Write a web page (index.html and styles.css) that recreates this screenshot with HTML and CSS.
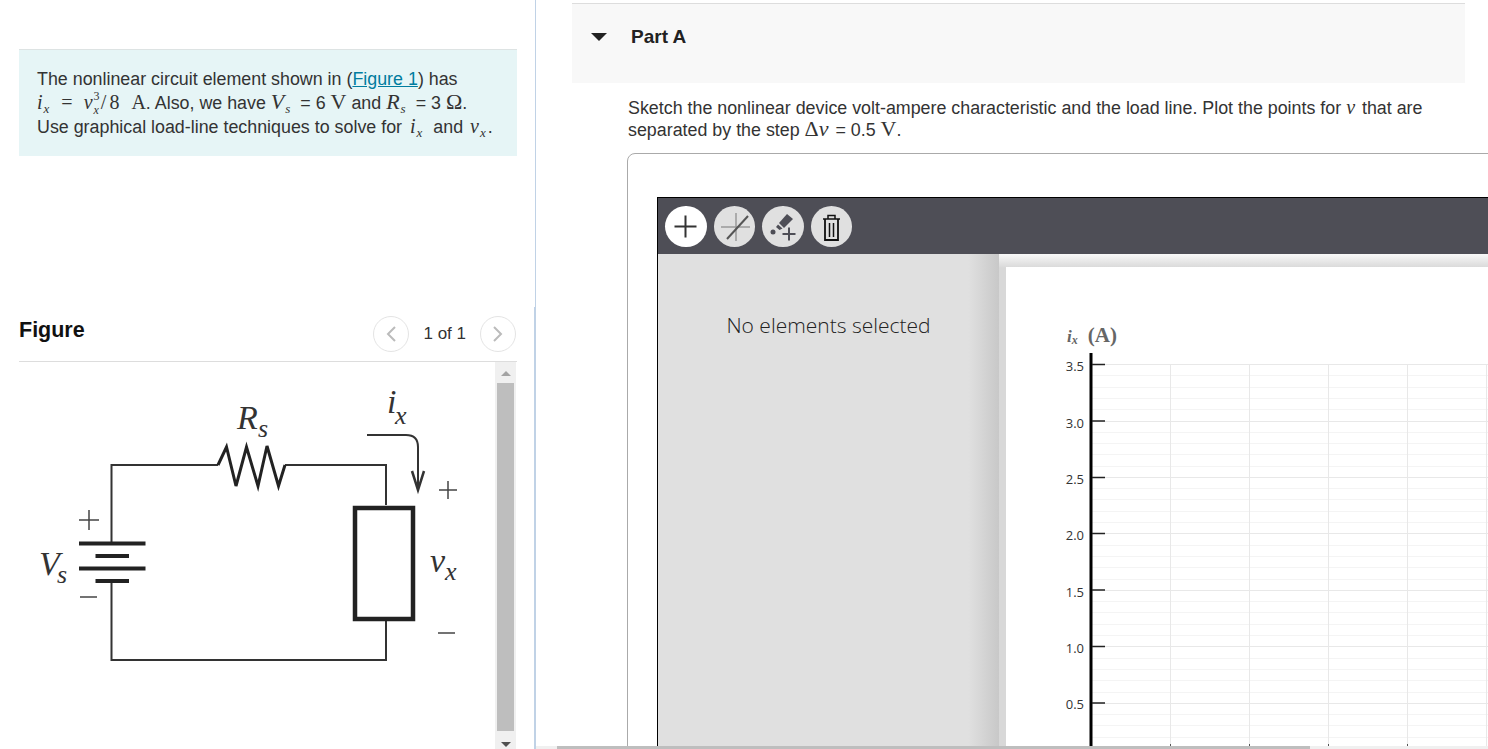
FILE: index.html
```html
<!DOCTYPE html>
<html lang="en">
<head>
    <meta charset="UTF-8">
    <title>Part A</title>
    <link rel="stylesheet" href="styles.css">
</head>
<body>
    <div class="page">
        <div class="left-col">
            <div class="statement">
                The nonlinear circuit element shown in (<a href="#">Figure 1</a>) has<br>
                <span class="m"><i>i</i><sub>x</sub><span class="rel">=</span><i>v</i><sup>3</sup><sub>x</sub><span class="slash">/</span>8<span class="unit">A</span></span>. Also, we have <span class="m big"><i>V</i><sub>s</sub></span> = 6 <span class="m big">V</span> and <span class="m big"><i>R</i><sub>s</sub></span> = 3 <span class="m big">Ω</span>.<br>
                Use graphical load-line techniques to solve for <span class="m first"><i>i</i><sub>x</sub></span> and <span class="m second"><i>v</i><sub>x</sub></span>.
            </div>
            <div class="figure-head">
                <h2>Figure</h2>
                <div class="pager">
                    <span class="pager-btn">
                        <svg width="12" height="18" viewBox="0 0 12 18"><path d="M10 2 3 9l7 7" fill="none" stroke="#bbb" stroke-width="2"/></svg>
                    </span>
                    <span class="pager-text">1 of 1</span>
                    <span class="pager-btn">
                        <svg width="12" height="18" viewBox="0 0 12 18"><path d="M2 2l7 7-7 7" fill="none" stroke="#bbb" stroke-width="2"/></svg>
                    </span>
                </div>
            </div>
            <div class="figure-body">
                <svg class="circuit" width="478" height="388" viewBox="0 362 478 388">
                    <g fill="none" stroke="#333" stroke-width="2">
                        <path d="M386 505V465H285"/>
                        <path d="M218 465H111.500V544"/>
                        <path d="M111.500 580V660H386V619"/>
                    </g>
                    <path d="M218 465l8.500-18 9.500 39 10.500-39 11.500 39 9-40 11.500 40 6.500-21" fill="none" stroke="#222" stroke-width="3"/>
                    <rect x="355" y="508" width="58" height="111" fill="none" stroke="#222" stroke-width="4.500"/>
                    <path d="M79 543.500H145.500M95.500 556H129M79 568.500H145.500M95.500 581H129" stroke="#222" stroke-width="4"/>
                    <path d="M367 435h39q12 0 12 12v42" fill="none" stroke="#333" stroke-width="2"/>
                    <path d="M412 471l6 19 6-19" fill="none" stroke="#333" stroke-width="2.500"/>
                    <g stroke="#444" stroke-width="1.500">
                        <path d="M439 490h18M448 481v18"/>
                        <path d="M438 633h17"/>
                        <path d="M79 520h20M89 510v20"/>
                        <path d="M80 597h17"/>
                    </g>
                    <text class="lbl" x="237" y="429">R</text>
                    <text class="lbl small" x="258" y="437">s</text>
                    <text class="lbl" x="387" y="413">i</text>
                    <text class="lbl small" x="395" y="424">x</text>
                    <text class="lbl" x="39" y="575">V</text>
                    <text class="lbl small" x="57" y="583">s</text>
                    <text class="lbl" x="430" y="572">v</text>
                    <text class="lbl small" x="445" y="580">x</text>
                </svg>
                <div class="scrollbar">
                    <span class="arrow-up"></span>
                    <span class="thumb"></span>
                    <span class="arrow-down"></span>
                </div>
            </div>
        </div>

        <div class="right-col">
            <div class="part-head">
                <span class="caret"></span>
                <h3>Part A</h3>
            </div>
            <p class="question">
                Sketch the nonlinear device volt-ampere characteristic and the load line. Plot the points for <span class="m"><i>v</i></span> that are<br>
                separated by the step <span class="m big">Δ<i>v</i></span> = 0.5 <span class="m big">V</span>.
            </p>
            <div class="answer-box">
                <div class="tool">
                    <div class="toolbar">
                        <span class="tool-btn active">
                            <svg width="41" height="41" viewBox="0 0 41 41"><path d="M20.500 9.500v22M9.500 20.500h22" stroke="#333" stroke-width="2"/></svg>
                        </span>
                        <span class="tool-btn">
                            <svg width="41" height="41" viewBox="0 0 41 41"><path d="M22 7v28M7 21h29" stroke="#999" stroke-width="1.500"/><path d="M13 33 34 10" stroke="#555" stroke-width="2"/></svg>
                        </span>
                        <span class="tool-btn">
                            <svg width="41" height="41" viewBox="0 0 41 41"><path d="M25 8l6 5-9 9-5-5z" fill="#4e4e56"/><path d="M16 18.500l4.500 4-3 1.500-3.500-3z" fill="#4e4e56"/><circle cx="11" cy="26" r="2.500" fill="#4e4e56"/><path d="M27 21.500v13M20.500 28h13" stroke="#4e4e56" stroke-width="2"/></svg>
                        </span>
                        <span class="tool-btn">
                            <svg width="41" height="41" viewBox="0 0 41 41"><path d="M12 13h17M17 13V9.500h7V13" fill="none" stroke="#111" stroke-width="1.500"/><path d="M14 13v21h13V13" fill="none" stroke="#111" stroke-width="1.800"/><path d="M18.500 17v14M22.500 17v14" stroke="#111" stroke-width="1.500"/></svg>
                        </span>
                    </div>
                    <div class="tool-main">
                        <div class="side-panel">No elements selected</div>
                        <div class="canvas-wrap">
                            <div class="canvas">
                                <svg class="chart" width="482" height="479" viewBox="1006 267 482 479">
                                    <g class="minor">
                                        <path d="M1091 375H1488M1091 387H1488M1091 398H1488M1091 409H1488M1091 432H1488M1091 443H1488M1091 454H1488M1091 466H1488M1091 488H1488M1091 499H1488M1091 511H1488M1091 522H1488M1091 545H1488M1091 556H1488M1091 567H1488M1091 579H1488M1091 601H1488M1091 612H1488M1091 624H1488M1091 635H1488M1091 658H1488M1091 669H1488M1091 680H1488M1091 692H1488M1091 714H1488M1091 725H1488M1091 737H1488"/>
                                    </g>
                                    <g class="major">
                                        <path d="M1091 364H1488M1091 421H1488M1091 477H1488M1091 533H1488M1091 590H1488M1091 646H1488M1091 703H1488"/>
                                        <path d="M1170.500 364V746M1249.500 364V746M1328.500 364V746M1407.500 364V746M1486.500 364V746"/>
                                    </g>
                                    <path d="M1170.500 744V746M1249.500 744V746M1328.500 744V746M1407.500 744V746" stroke="#555"/>
                                    <path d="M1091 353V746" stroke="#000" stroke-width="3"/>
                                    <path d="M1092 364.500h13M1092 421h13M1092 477.500h13M1092 533.500h13M1092 590h13M1092 646.500h13M1092 703h13" stroke="#222" stroke-width="1.500"/>
                                    <g class="tick-label">
                                        <text x="1084" y="371">3.5</text>
                                        <text x="1084" y="428">3.0</text>
                                        <text x="1084" y="484">2.5</text>
                                        <text x="1084" y="540">2.0</text>
                                        <text x="1084" y="597">1.5</text>
                                        <text x="1084" y="653">1.0</text>
                                        <text x="1084" y="709">0.5</text>
                                    </g>
                                    <text class="axis-title" x="1067" y="342"><tspan class="it">i</tspan><tspan class="it sub" dy="2">x</tspan><tspan dy="-2" dx="10">(A)</tspan></text>
                                </svg>
                            </div>
                        </div>
                    </div>
                </div>
            </div>
        </div>
        <div class="h-scroll"><span class="h-thumb"></span></div>
    </div>
</body>
</html>
```

FILE: styles.css
```css
html, body {
    margin: 0;
    height: 100%;
    overflow: hidden;
    background: #fff;
}

body {
    font-family: "Liberation Sans", Arial, sans-serif;
    font-size: 17.85px;
    color: #333;
}

.page {
    position: relative;
    display: flex;
    width: 1488px;
    height: 749px;
    overflow: hidden;
}

.left-col {
    position: relative;
    box-sizing: border-box;
    width: 536px;
    height: 749px;
    padding: 49px 18px 0 19px;
    border-right: 1px solid #c0d2e6;
    flex-shrink: 0;
}

/* the divider gets thicker from here down */
.left-col::after {
    content: "";
    position: absolute;
    top: 307px;
    right: 0;
    bottom: 0;
    width: 1px;
    background: #c0d2e6;
}

.statement {
    box-sizing: border-box;
    height: 107px;
    padding: 17px 18px 0;
    border-top: 1px solid #dde3e3;
    background: #e6f5f6;
    line-height: 24px;
    white-space: nowrap;
}

.statement a {
    color: #007c9f;
}

.m {
    font-family: "Liberation Serif", "Times New Roman", serif;
    font-size: 20px;
    line-height: 0;
}

.m.big {
    font-size: 22px;
}

.m.first {
    margin: 0 4px 0 3px;
}

.m.second {
    margin-left: 2px;
}

.m i {
    margin-right: 1px;
}

.m sub {
    font-size: 13px;
    font-style: italic;
    line-height: 0;
    vertical-align: -4px;
    margin-right: 2px;
}

.m.big sub {
    margin-right: 5px;
}

.m sup {
    display: inline-block;
    width: 0;
    font-size: 12px;
    line-height: 0;
    vertical-align: 9px;
}

.m sup + sub {
    font-size: 12px;
    vertical-align: -5px;
}

.rel {
    margin: 0 11px 0 10px;
}

.slash {
    margin: 0 3px 0 0;
}

.unit {
    margin-left: 12px;
}

.figure-head {
    display: flex;
    justify-content: space-between;
    align-items: center;
    height: 55px;
    margin-top: 150px;
    border-bottom: 1px solid #ddd;
}

.figure-head h2 {
    margin: 0 0 6px;
    font-size: 21.5px;
    color: #111;
}

.pager {
    display: flex;
    align-items: center;
    gap: 14px;
    margin-right: 1px;
}

.pager-btn {
    box-sizing: border-box;
    display: flex;
    justify-content: center;
    align-items: center;
    width: 36px;
    height: 36px;
    border: 1px solid #e4e4e4;
    border-radius: 50%;
}

.pager-text {
    font-size: 17px;
}

.figure-body {
    display: flex;
    justify-content: space-between;
    height: 388px;
}

.circuit {
    display: block;
    margin-left: -19px;
}

.lbl {
    font-family: "Liberation Serif", serif;
    font-style: italic;
    font-size: 34px;
    fill: #333;
}

.lbl.small {
    font-size: 26px;
}

.scrollbar {
    display: flex;
    flex-direction: column;
    align-items: center;
    width: 21px;
    margin-right: 1px;
    background: #f0f0f0;
}

.scrollbar .thumb {
    flex: 1;
    width: 17px;
    background: #bebebe;
}

.arrow-up, .arrow-down {
    width: 0;
    height: 0;
    border-left: 5px solid transparent;
    border-right: 5px solid transparent;
}

.arrow-up {
    margin: 9px 0 7px;
    border-bottom: 5px solid #a3a3a3;
}

.arrow-down {
    margin: 11px 0 3px;
    border-top: 5px solid #505050;
}

.right-col {
    flex: 1;
    min-width: 0;
    padding: 3px 23px 0 36px;
}

.part-head {
    box-sizing: border-box;
    display: flex;
    align-items: flex-start;
    height: 80px;
    padding: 23px 0 0 19px;
    border-top: 1px solid #ddd;
    background: #f8f8f8;
}

.caret {
    width: 0;
    height: 0;
    margin-top: 6px;
    border-left: 8px solid transparent;
    border-right: 8px solid transparent;
    border-top: 8px solid #222;
}

.part-head h3 {
    margin: 0 0 0 24px;
    font-size: 19px;
    line-height: 20px;
    color: #222;
}

.question {
    margin: 14px 0 0 56px;
    line-height: 22px;
    white-space: nowrap;
}

.question .m i {
    margin-right: 2px;
}

.answer-box {
    box-sizing: border-box;
    width: 900px;
    height: 620px;
    margin: 12px 0 0 55px;
    padding: 43px 0 0 29px;
    border: 1px solid #aaa;
    border-radius: 8px 0 0 0;
}

.tool {
    box-sizing: border-box;
    width: 900px;
    height: 560px;
    border-top: 1px solid #000;
    border-left: 1px solid #000;
}

.toolbar {
    display: flex;
    align-items: center;
    gap: 7px;
    height: 56px;
    padding-left: 7px;
    background: #4e4e56;
}

.tool-btn {
    display: flex;
    justify-content: center;
    align-items: center;
    width: 41.500px;
    height: 41px;
    border-radius: 50%;
    background: #e0e0e0;
}

.tool-btn.active {
    background: #fff;
}

.tool-main {
    display: flex;
    height: 492px;
}

.side-panel {
    box-sizing: border-box;
    width: 341px;
    padding-top: 57px;
    background: linear-gradient(to right, #e0e0e0 91%, #c8c8c8 100%);
    font-family: "Open Sans", sans-serif;
    font-weight: 300;
    font-size: 21px;
    line-height: 28px;
    text-align: center;
    color: #222;
}

.canvas-wrap {
    flex: 1;
    padding: 13px 0 0 7px;
    overflow: hidden;
    background: linear-gradient(to bottom, #f8f8f8, #d8d8d8 14px);
}

.canvas {
    height: 479px;
    background: #fff;
}

.chart {
    display: block;
}

.minor path {
    fill: none;
    stroke: #f4f4f4;
    stroke-width: 1;
    shape-rendering: crispEdges;
}

.major path {
    fill: none;
    stroke: #e8e8e8;
    stroke-width: 1;
    shape-rendering: crispEdges;
}

.tick-label text {
    font-family: "Open Sans", sans-serif;
    font-size: 13px;
    text-anchor: end;
    fill: #333;
}

.axis-title {
    font-family: "Liberation Serif", serif;
    font-weight: bold;
    font-size: 21px;
    fill: #666;
}

.axis-title .it {
    font-style: italic;
    font-size: 17px;
}

.axis-title .sub {
    font-size: 12px;
}

.h-scroll {
    position: absolute;
    left: 536px;
    right: 0;
    bottom: 0;
    height: 3px;
    background: #f0f0f0;
}

.h-thumb {
    display: block;
    width: 753px;
    height: 3px;
    margin-left: 21px;
    background: #bebebe;
}
```
